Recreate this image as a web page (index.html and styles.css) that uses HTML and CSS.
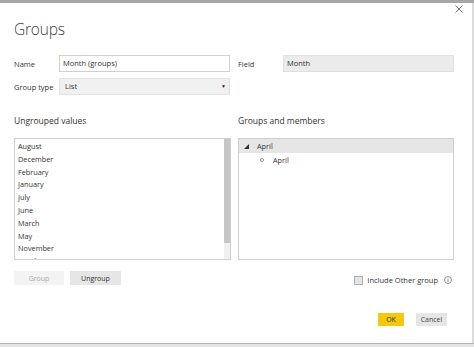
FILE: index.html
```html
<!DOCTYPE html>
<html>
<head>
<meta charset="utf-8">
<link rel="stylesheet" href="styles.css">
</head>
<body>
<div class="topbar"></div>
<div class="frame">
  <div class="dialog">
    <div class="header">
      <h1 class="title">Groups</h1>
      <button class="close" aria-label="Close">
        <svg width="8" height="8" viewBox="0 0 8 8"><path d="M0.5 0.5 L7.5 7.5 M7.5 0.5 L0.5 7.5" stroke="#6a6a6a" stroke-width="0.9" fill="none"/></svg>
      </button>
    </div>
    <div class="form">
      <div class="row">
        <label class="lbl">Name</label>
        <div class="input">Month (groups)</div>
        <label class="lbl lbl-right">Field</label>
        <div class="input input-ro">Month</div>
      </div>
      <div class="row">
        <label class="lbl">Group type</label>
        <div class="input select"><span>List</span><span class="caret">▼</span></div>
      </div>
    </div>
    <div class="panels">
      <div class="panel">
        <div class="panel-title">Ungrouped values</div>
        <div class="listbox">
          <ul class="items">
            <li>August</li>
            <li>December</li>
            <li>February</li>
            <li>January</li>
            <li>July</li>
            <li>June</li>
            <li>March</li>
            <li>May</li>
            <li>November</li>
            <li>October</li>
          </ul>
          <div class="scrolltrack"><div class="thumb"></div></div>
        </div>
        <div class="btnrow">
          <button class="btn btn-disabled">Group</button>
          <button class="btn">Ungroup</button>
        </div>
      </div>
      <div class="panel panel-right">
        <div class="panel-title">Groups and members</div>
        <div class="listbox tree">
          <div class="group-row">
            <svg class="tri" width="5" height="5" viewBox="0 0 5 5"><path d="M5 0 L5 5 L0 5 Z" fill="#333"/></svg>
            <span>April</span>
          </div>
          <div class="member-row">
            <svg class="bullet" width="4" height="4" viewBox="0 0 4 4"><circle cx="2" cy="2" r="1.5" stroke="#666" stroke-width="0.7" fill="none"/></svg>
            <span>April</span>
          </div>
        </div>
        <div class="optrow">
          <span class="checkbox"></span>
          <span class="optlabel">Include Other group</span>
          <svg class="info" width="8" height="8" viewBox="0 0 8 8"><circle cx="4" cy="4" r="3.5" stroke="#777" stroke-width="0.8" fill="none"/><path d="M4 3.4 V6" stroke="#777" stroke-width="0.8"/><circle cx="4" cy="2.3" r="0.45" fill="#777"/></svg>
        </div>
      </div>
    </div>
    <div class="footer">
      <button class="btn btn-ok">OK</button>
      <button class="btn btn-cancel">Cancel</button>
    </div>
  </div>
  <div class="rightstrip"></div>
</div>
<div class="bottombar"></div>
</body>
</html>
```
FILE: styles.css
```css
html, body {
  margin: 0;
  padding: 0;
}
body {
  width: 474px;
  height: 347px;
  overflow: hidden;
  background: #ffffff;
  font-family: "Open Sans", "Noto Sans", sans-serif;
  color: #333333;
}
.topbar {
  height: 3px;
  background: #a6a6a6;
}
.frame {
  display: flex;
  height: 340px;
}
.dialog {
  width: 472px;
  background: #ffffff;
  box-sizing: border-box;
  padding: 0 18px 0 14px;
  display: flex;
  flex-direction: column;
}
.rightstrip {
  width: 2px;
  background: #dcdcdc;
}
.bottombar {
  height: 4px;
  border-top: 1px solid #b4b4b4;
  background: #e4e4e4;
}
.header {
  display: flex;
  justify-content: space-between;
  align-items: flex-start;
  height: 52px;
}
.title {
  margin: 15px 0 0 0;
  font-size: 15.5px;
  line-height: 22px;
  font-weight: 300;
  letter-spacing: -0.2px;
  color: #3c3c3c;
}
.close {
  margin: 2px -9px 0 0;
  padding: 0;
  border: 0;
  background: transparent;
  width: 8px;
  height: 8px;
  display: flex;
}
.form {
  display: flex;
  flex-direction: column;
  gap: 6px;
}
.row {
  display: flex;
  align-items: center;
  height: 17px;
}
.lbl {
  width: 45px;
  font-size: 7.5px;
  color: #333;
}
.lbl-right {
  margin-left: 8px;
}
.input {
  width: 171px;
  height: 17px;
  box-sizing: border-box;
  border: 1px solid #d0d0d0;
  background: #ffffff;
  font-size: 7.5px;
  line-height: 15px;
  padding: 0 3px;
  color: #333;
}
.input-ro {
  background: #ebebeb;
  border-color: #e0e0e0;
  padding-left: 3px;
}
.select {
  display: flex;
  justify-content: space-between;
  background: #f0f0f0;
  border-color: #e2e2e2;
  padding: 0 3px 0 5px;
}
.caret {
  font-size: 5px;
  color: #222;
}
.panels {
  display: flex;
  gap: 7px;
  margin-top: 20px;
}
.panel {
  width: 217px;
  display: flex;
  flex-direction: column;
}
.panel-right {
  width: 216px;
}
.panel-title {
  font-size: 8.5px;
  line-height: 12px;
  color: #333;
  height: 12px;
  margin-bottom: 11px;
}
.listbox {
  height: 122px;
  box-sizing: border-box;
  border: 1px solid #cfcfcf;
  background: #fff;
  display: flex;
  overflow: hidden;
}
.items {
  list-style: none;
  margin: 0;
  padding: 1px 0 0 3px;
  flex: 1;
  font-size: 7.3px;
  line-height: 12.8px;
  color: #333;
}
.scrolltrack {
  width: 6px;
  background: #f0f0f0;
}
.thumb {
  height: 104px;
  background: #c6c6c6;
}
.btnrow {
  display: flex;
  gap: 6px;
  margin-top: 11px;
}
.btn {
  height: 14px;
  width: 51px;
  border: 0;
  padding: 0;
  background: #e6e6e6;
  font-family: "Open Sans", "Noto Sans", sans-serif;
  font-size: 7px;
  color: #333;
}
.btn-disabled {
  width: 50px;
  background: #f3f3f3;
  color: #aaaaaa;
}
.tree {
  flex-direction: column;
  font-size: 7.3px;
  color: #333;
}
.group-row {
  display: flex;
  align-items: center;
  height: 14px;
  background: #e6e6e6;
  padding-left: 5px;
}
.tri {
  margin-right: 8px;
}
.member-row {
  display: flex;
  align-items: center;
  height: 13px;
  padding-left: 21px;
}
.bullet {
  margin-right: 9px;
}
.optrow {
  display: flex;
  align-items: center;
  justify-content: flex-end;
  margin-top: 15px;
  padding-right: 2px;
  height: 10px;
}
.checkbox {
  width: 7px;
  height: 7px;
  border: 1px solid #b0b0b0;
  background: #e4e4e4;
  margin-right: 4px;
}
.optlabel {
  font-size: 7.5px;
  color: #333;
  margin-right: 6px;
}
.footer {
  display: flex;
  justify-content: flex-end;
  gap: 12px;
  margin-top: 28px;
  padding-right: 7px;
}
.btn-ok {
  width: 26px;
  height: 13px;
  background: #f2c811;
  color: #333;
}
.btn-cancel {
  width: 31px;
  height: 13px;
  background: #e6e6e6;
  color: #444;
}
```
